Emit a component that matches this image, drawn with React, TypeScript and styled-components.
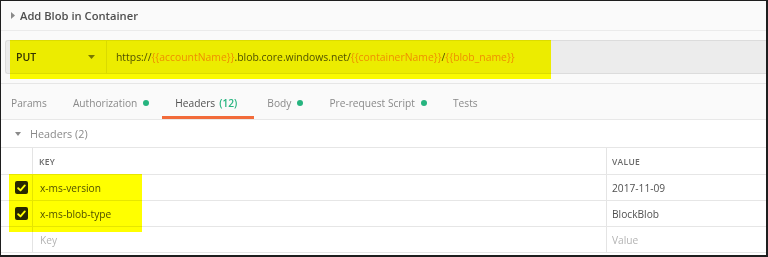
import styled, { createGlobalStyle } from "styled-components";

type Tab = {
  label: string;
  count?: string;
  dot?: boolean;
  active?: boolean;
};

type HeaderRow = {
  key: string;
  value: string;
};

type UrlPart = {
  text: string;
  isVar?: boolean;
};

const tabs: Tab[] = [
  { label: "Params" },
  { label: "Authorization", dot: true },
  { label: "Headers", count: "(12)", active: true },
  { label: "Body", dot: true },
  { label: "Pre-request Script", dot: true },
  { label: "Tests" },
];

const headerRows: HeaderRow[] = [
  { key: "x-ms-version", value: "2017-11-09" },
  { key: "x-ms-blob-type", value: "BlockBlob" },
];

const urlParts: UrlPart[] = [
  { text: "https://" },
  { text: "{{accountName}}", isVar: true },
  { text: ".blob.core.windows.net/" },
  { text: "{{containerName}}", isVar: true },
  { text: "/" },
  { text: "{{blob_name}}", isVar: true },
];

export default function App() {
  return (
    <>
      <GlobalStyle />
      <Frame>
        <TitleBar>
          <svg width="4" height="7" viewBox="0 0 4 7">
            <path d="M0 0 L4 3.5 L0 7 Z" fill="#8a8a8a" />
          </svg>
          <Title>Add Blob in Container</Title>
        </TitleBar>

        <RequestSection>
          <UrlBar>
            <MethodSelect>
              <span>PUT</span>
              <svg width="7" height="4" viewBox="0 0 7 4">
                <path d="M0 0 L7 0 L3.5 4 Z" fill="#777" />
              </svg>
            </MethodSelect>
            <UrlText>
              {urlParts.map((part, i) =>
                part.isVar ? <UrlVar key={i}>{part.text}</UrlVar> : <span key={i}>{part.text}</span>
              )}
            </UrlText>
          </UrlBar>
        </RequestSection>

        <TabBar>
          {tabs.map((tab) => (
            <TabItem key={tab.label} $active={!!tab.active}>
              {tab.label}
              {tab.count && <TabCount>{tab.count}</TabCount>}
              {tab.dot && <TabDot />}
            </TabItem>
          ))}
        </TabBar>

        <SectionLabel>
          <svg width="6" height="4" viewBox="0 0 6 4">
            <path d="M0 0 L6 0 L3 4 Z" fill="#8a8a8a" />
          </svg>
          <span>Headers (2)</span>
        </SectionLabel>

        <Table>
          <Row $header>
            <CheckCell />
            <Cell $head>KEY</Cell>
            <Cell $head>VALUE</Cell>
          </Row>
          {headerRows.map((row) => (
            <Row key={row.key}>
              <CheckCell>
                <CheckBox>
                  <svg width="9" height="8" viewBox="0 0 9 8">
                    <path
                      d="M1.2 4.2 L3.5 6.4 L7.8 1.4"
                      fill="none"
                      stroke="#fff"
                      strokeWidth="1.9"
                      strokeLinecap="round"
                      strokeLinejoin="round"
                    />
                  </svg>
                </CheckBox>
              </CheckCell>
              <Cell>{row.key}</Cell>
              <Cell>{row.value}</Cell>
            </Row>
          ))}
          <Row>
            <CheckCell />
            <Cell $placeholder>Key</Cell>
            <Cell $placeholder>Value</Cell>
          </Row>
        </Table>

        <Highlight style={{ left: 9, top: 39, width: 541, height: 39 }} />
        <Highlight style={{ left: 8, top: 173, width: 133, height: 58 }} />
      </Frame>
    </>
  );
}

const GlobalStyle = createGlobalStyle`
  *, *::before, *::after {
    box-sizing: border-box;
  }
  html, body {
    margin: 0;
    padding: 0;
    background: #ffffff;
  }
  body {
    font-family: "Open Sans", "Liberation Sans", sans-serif;
  }
`;

const Frame = styled.div`
  position: relative;
  width: 768px;
  height: 257px;
  display: flex;
  flex-direction: column;
  overflow: hidden;
  background: #ffffff;
  border: 1px solid #1e1e1e;
  border-right-width: 2px;
  border-bottom-width: 2px;
  color: #505050;
`;

// title
const TitleBar = styled.div`
  flex-shrink: 0;
  height: 30px;
  display: flex;
  align-items: center;
  gap: 5px;
  padding: 0 0 1px 10px;
  background: #fafafa;
  border-bottom: 1px solid #ebebeb;
`;
const Title = styled.span`
  font-size: 11.2px;
  font-weight: 600;
  color: #4e4e4e;
`;

// request bar
const RequestSection = styled.div`
  flex-shrink: 0;
  height: 53px;
  padding: 9px 0 0 4px;
  background: #fafafa;
  border-bottom: 1px solid #e6e6e6;
`;
const UrlBar = styled.div`
  height: 34px;
  display: flex;
  align-items: stretch;
  background: #ececec;
  border: 1px solid #dcdcdc;
  border-right: none;
  border-radius: 3px 0 0 3px;
`;
const MethodSelect = styled.div`
  width: 101px;
  display: flex;
  align-items: center;
  justify-content: space-between;
  padding: 0 11px 0 10px;
  border-right: 1px solid #dadada;
  font-size: 10.5px;
  font-weight: 600;
  color: #333;
`;
const UrlText = styled.div`
  display: flex;
  align-items: center;
  padding-left: 9px;
  font-size: 10.4px;
  color: #505050;
  white-space: nowrap;
`;
const UrlVar = styled.span`
  color: #ef8f0c;
`;

// tabs
const TabBar = styled.div`
  flex-shrink: 0;
  height: 36px;
  display: flex;
  align-items: stretch;
  background: #fafafa;
  border-bottom: 1px solid #e8e8e8;
`;
const TabItem = styled.div<{ $active: boolean }>`
  display: flex;
  align-items: center;
  padding: 6px 13px 0;
  font-size: 10.2px;
  color: ${({ $active }) => ($active ? "#505050" : "#8a8a8a")};
  border-bottom: 3px solid ${({ $active }) => ($active ? "#f26b3a" : "transparent")};
  white-space: nowrap;
  &:first-child {
    padding-left: 10px;
  }
`;
const TabCount = styled.span`
  margin: 0 4px 0 4px;
  font-weight: 600;
  color: #26b47f;
`;
const TabDot = styled.span`
  width: 6px;
  height: 6px;
  margin-left: 6px;
  border-radius: 50%;
  background: #26b47f;
`;

// headers table
const SectionLabel = styled.div`
  flex-shrink: 0;
  height: 27px;
  display: flex;
  align-items: center;
  gap: 9px;
  padding-left: 14px;
  font-size: 10.8px;
  color: #8a8a8a;
`;
const Table = styled.div`
  border-top: 1px solid #e6e6e6;
`;
const Row = styled.div<{ $header?: boolean }>`
  height: ${({ $header }) => ($header ? "27px" : "26px")};
  display: grid;
  grid-template-columns: 31px 574px 1fr;
  border-bottom: 1px solid #e6e6e6;
`;
const CheckCell = styled.div`
  display: flex;
  align-items: center;
  padding-left: 14px;
`;
const Cell = styled.div<{ $head?: boolean; $placeholder?: boolean }>`
  display: flex;
  align-items: center;
  padding-left: ${({ $head }) => ($head ? "6px" : "7px")};
  border-left: 1px solid #e4e4e4;
  font-size: ${({ $head }) => ($head ? "8.5px" : "10.2px")};
  font-weight: ${({ $head }) => ($head ? 600 : 400)};
  letter-spacing: ${({ $head }) => ($head ? "0.3px" : "0")};
  color: ${({ $head, $placeholder }) =>
    $placeholder ? "#b4b4b4" : $head ? "#6a6a6a" : "#505050"};
  & + & {
    padding-left: 5px;
  }
`;
const CheckBox = styled.span`
  width: 13px;
  height: 13px;
  display: flex;
  align-items: center;
  justify-content: center;
  border-radius: 2px;
  background: #282828;
`;

// yellow marker annotations over the screenshot
const Highlight = styled.div`
  position: absolute;
  background: #ffff00;
  mix-blend-mode: multiply;
  pointer-events: none;
`;
